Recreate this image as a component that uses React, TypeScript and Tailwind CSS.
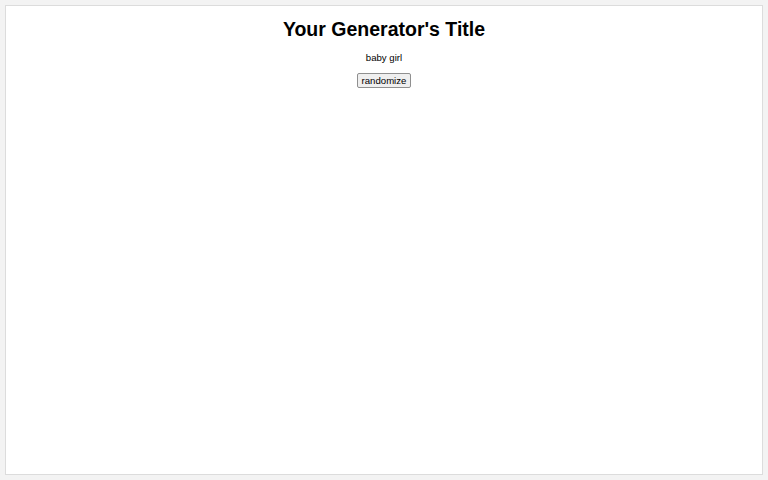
export default function App() {
  return (
    <div className="h-[480px] w-full bg-[#f3f3f3] p-[5px] font-['Liberation_Sans',Arial,sans-serif]">
      <div className="flex h-[470px] flex-col items-center border border-[#dcdcdc] bg-white">
        <h1 className="mt-[12px] text-[19.5px] font-bold leading-[22px] text-black">Your Generator's Title</h1>
        <p className="mt-[12px] text-[9.6px] leading-[12px] text-black">baby girl</p>
        <button className="mt-[9px] h-[15px] rounded-[2px] border border-[#8f8f8f] bg-[#efefef] px-[4px] text-[9.6px] leading-[12px] text-black">
          randomize
        </button>
      </div>
    </div>
  );
}
